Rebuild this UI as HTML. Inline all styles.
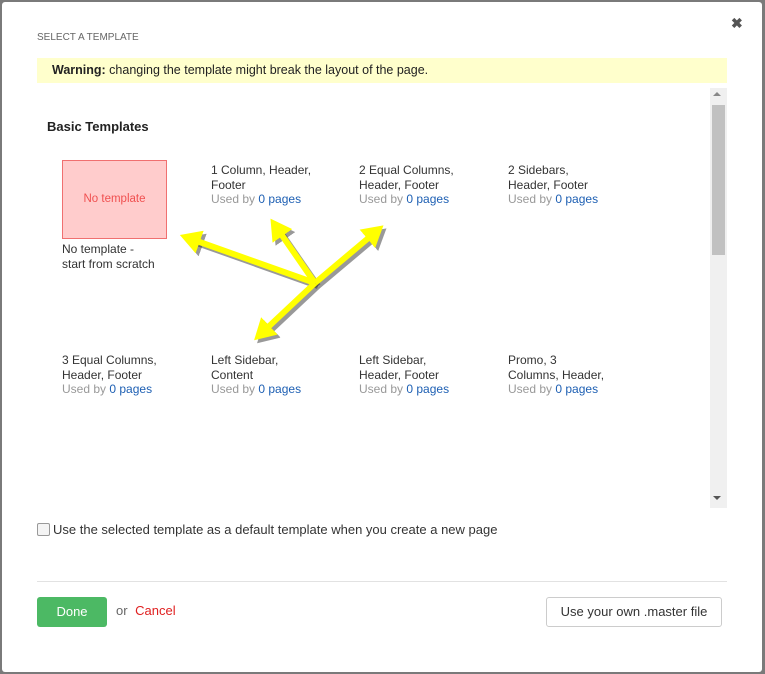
<!DOCTYPE html>
<html><head><style>
body{margin:0;width:765px;height:674px;background:#7a7a7a;font-family:"Liberation Sans",sans-serif;overflow:hidden;position:relative}
.dlg{position:absolute;left:2px;top:2px;width:760px;height:670px;background:#fff;border-radius:3px}
.a{position:absolute}
.t{font-size:12px;line-height:14.5px;color:#333}
.u{color:#999}
.l{color:#1d5fb3}
</style></head><body>
<div class="dlg"></div>
<div class="a" style="left:37px;top:32px;font-size:10px;color:#666">SELECT A TEMPLATE</div>
<div class="a" style="left:731px;top:15px;font-size:14px;font-weight:bold;color:#555">✖</div>
<div class="a" style="left:37px;top:58px;width:690px;height:25px;background:#ffffcc;font-size:12.5px;line-height:25px;color:#222"><span style="padding-left:15px"><b>Warning:</b> changing the template might break the layout of the page.</span></div>
<div class="a" style="left:710px;top:88px;width:17px;height:420px;background:#f0f0f0"></div>
<div class="a" style="left:712px;top:105px;width:13px;height:150px;background:#c1c1c1"></div>
<div class="a" style="left:713px;top:92px;width:0;height:0;border:4px solid transparent;border-bottom:4px solid #888;border-top:0"></div>
<div class="a" style="left:713px;top:496px;width:0;height:0;border:4px solid transparent;border-top:4px solid #555;border-bottom:0"></div>
<div class="a" style="left:47px;top:119px;font-size:13px;font-weight:bold;color:#222">Basic Templates</div>
<div class="a" style="left:62px;top:160px;width:103px;height:77px;background:#ffcccc;border:1px solid #f07070;color:#f05050;font-size:11.5px;text-align:center;line-height:77px">No template</div>
<div class="a t" style="left:62px;top:242px">No template -<br>start from scratch</div>
<div class="a t" style="left:211px;top:163px">1 Column, Header,<br>Footer<br><span class="u">Used by </span><span class="l">0 pages</span></div>
<div class="a t" style="left:359px;top:163px">2 Equal Columns,<br>Header, Footer<br><span class="u">Used by </span><span class="l">0 pages</span></div>
<div class="a t" style="left:508px;top:163px">2 Sidebars,<br>Header, Footer<br><span class="u">Used by </span><span class="l">0 pages</span></div>
<div class="a t" style="left:62px;top:353px">3 Equal Columns,<br>Header, Footer<br><span class="u">Used by </span><span class="l">0 pages</span></div>
<div class="a t" style="left:211px;top:353px">Left Sidebar,<br>Content<br><span class="u">Used by </span><span class="l">0 pages</span></div>
<div class="a t" style="left:359px;top:353px">Left Sidebar,<br>Header, Footer<br><span class="u">Used by </span><span class="l">0 pages</span></div>
<div class="a t" style="left:508px;top:353px">Promo, 3<br>Columns, Header,<br><span class="u">Used by </span><span class="l">0 pages</span></div>
<svg class="a" style="left:0;top:0" width="765" height="674">
<defs><marker id="h" markerWidth="4" markerHeight="4" refX="1" refY="2" orient="auto" markerUnits="strokeWidth"><path d="M0,0 L3.5,2 L0,4 Z" fill="#ffff00"/></marker>
<marker id="hs" markerWidth="4" markerHeight="4" refX="1" refY="2" orient="auto" markerUnits="strokeWidth"><path d="M0,0 L3.5,2 L0,4 Z" fill="#333" opacity=".5"/></marker></defs>
<g stroke="#333" stroke-opacity=".5" stroke-width="6" transform="translate(3,3)">
<line x1="315" y1="283" x2="194" y2="240" marker-end="url(#hs)"/><line x1="315" y1="283" x2="279" y2="231" marker-end="url(#hs)"/><line x1="315" y1="283" x2="372" y2="235" marker-end="url(#hs)"/><line x1="315" y1="283" x2="265" y2="330" marker-end="url(#hs)"/></g>
<g stroke="#ffff00" stroke-width="6">
<line x1="315" y1="283" x2="194" y2="240" marker-end="url(#h)"/><line x1="315" y1="283" x2="279" y2="231" marker-end="url(#h)"/><line x1="315" y1="283" x2="372" y2="235" marker-end="url(#h)"/><line x1="315" y1="283" x2="265" y2="330" marker-end="url(#h)"/></g>
</svg>
<div class="a" style="left:37px;top:523px;width:11px;height:11px;border:1px solid #999;border-radius:2px;background:#f4f4f4"></div>
<div class="a" style="left:53px;top:522px;font-size:13px;color:#333">Use the selected template as a default template when you create a new page</div>
<div class="a" style="left:37px;top:581px;width:690px;height:1px;background:#e2e2e2"></div>
<div class="a" style="left:37px;top:597px;width:70px;height:30px;background:#4cb964;border-radius:3px;color:#fff;font-size:13px;text-align:center;line-height:30px">Done</div>
<div class="a" style="left:116px;top:603px;font-size:13px;color:#666">or <span style="color:#e02020;margin-left:4px">Cancel</span></div>
<div class="a" style="left:546px;top:597px;width:174px;height:28px;border:1px solid #ccc;border-radius:3px;font-size:13px;color:#333;text-align:center;line-height:28px">Use your own .master file</div>
</body></html>
